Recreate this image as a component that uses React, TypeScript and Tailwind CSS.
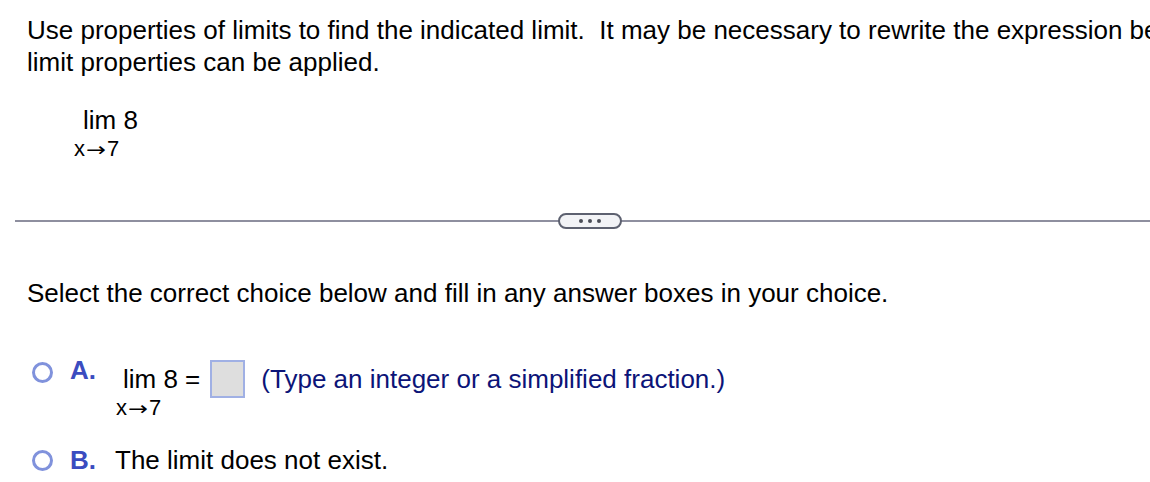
function Arrow() {
  return <span style={{ fontFamily: '"DejaVu Sans", sans-serif' }} className="inline-block scale-x-[1.25] mx-[3px] text-[19px]">→</span>;
}

export default function App() {
  return (
    <div className="w-[1150px] h-[482px] overflow-hidden bg-white text-black" style={{ fontFamily: '"Liberation Sans", Arial, sans-serif' }}>
      <div className="w-[1240px] pl-[27px] pt-[14px]">
        <p className="text-[26px] leading-[32px]">
          Use properties of limits to find the indicated limit.&nbsp; It may be necessary to rewrite the expression before limit properties can be applied.
        </p>
        <div className="mt-[27px] ml-[47px] flex flex-col items-start">
          <span className="text-[26px] leading-[30px] ml-[9px]">lim 8</span>
          <span className="text-[22px] leading-[24px] mt-[2px] flex items-center">x<Arrow />7</span>
        </div>
      </div>

      <div className="relative mt-[50px] ml-[15px] h-[20px] flex items-center">
        <div className="w-full h-[2px] bg-[#8e8f9f]" />
        <div className="absolute left-[543px] top-[2px] w-[64px] h-[16px] rounded-full border-2 border-[#5d6170] bg-[#f2f3f6] flex items-center justify-center gap-[5px]">
          <span className="w-[4px] h-[4px] rounded-full bg-[#4a4d57]" />
          <span className="w-[4px] h-[4px] rounded-full bg-[#4a4d57]" />
          <span className="w-[4px] h-[4px] rounded-full bg-[#4a4d57]" />
        </div>
      </div>

      <div className="pl-[27px] mt-[46px]">
        <p className="text-[26px] leading-[32px]">Select the correct choice below and fill in any answer boxes in your choice.</p>

        <div className="mt-[46px] flex items-start">
          <span className="mt-[7px] ml-[5px] w-[21px] h-[21px] rounded-full border-[3px] border-[#8092dc]" />
          <span className="ml-[17px] text-[26px] leading-[30px] font-bold text-[#3b4cc0]">A.</span>
          <div className="ml-[20px] flex flex-col items-start pt-[5px]">
            <div className="flex items-center">
              <span className="ml-[7px] text-[26px] leading-[30px]">lim 8 =</span>
              <span className="ml-[10px] w-[35px] h-[38px] bg-[#dedede] border-2 border-[#a0b0e4]" />
              <span className="ml-[16px] text-[26px] leading-[30px] text-[#0c1478]">(Type an integer or a simplified fraction.)</span>
            </div>
            <span className="text-[22px] leading-[24px] -mt-[2px] flex items-center">x<Arrow />7</span>
          </div>
        </div>

        <div className="mt-[25px] flex items-center">
          <span className="ml-[5px] w-[21px] h-[21px] rounded-full border-[3px] border-[#8092dc]" />
          <span className="ml-[17px] text-[26px] leading-[30px] font-bold text-[#3b4cc0]">B.</span>
          <span className="ml-[19px] text-[26px] leading-[30px]">The limit does not exist.</span>
        </div>
      </div>
    </div>
  );
}
